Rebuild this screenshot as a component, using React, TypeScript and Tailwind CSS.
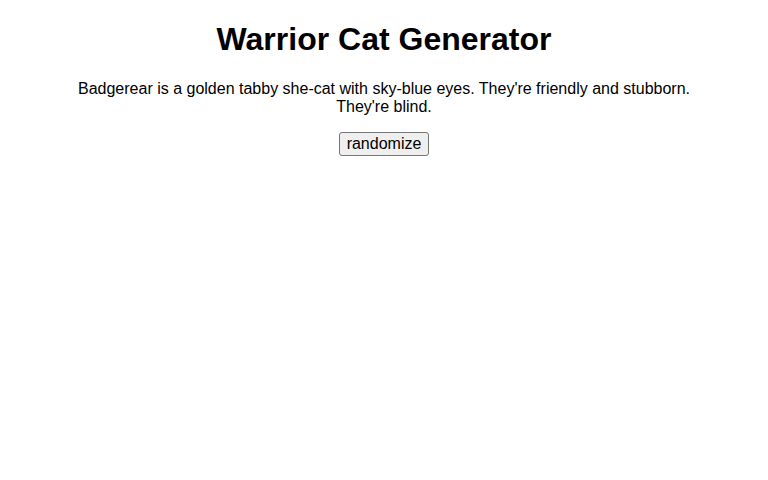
import { useState } from "react";

// Plain generator page: heading, a sentence describing the cat, and a reroll button.
export default function App() {
  const [desc] = useState(
    "Badgerear is a golden tabby she-cat with sky-blue eyes. They're friendly and stubborn. They're blind."
  );

  return (
    <div className="min-h-[480px] bg-white text-center text-black font-['Liberation_Sans',Arial,sans-serif]">
      <h1 className="pt-[21.44px] text-[32px] font-bold leading-[37px]">Warrior Cat Generator</h1>
      <p className="mx-auto mt-[21.44px] max-w-[640px] text-[16px] leading-[18.4px]">{desc}</p>
      <div className="mt-[15px] flex justify-center">
        <button className="rounded-[3px] border border-[#767676] bg-[#efefef] px-[7px] py-[2px] text-[16px] leading-[18.4px] text-black">
          randomize
        </button>
      </div>
    </div>
  );
}
